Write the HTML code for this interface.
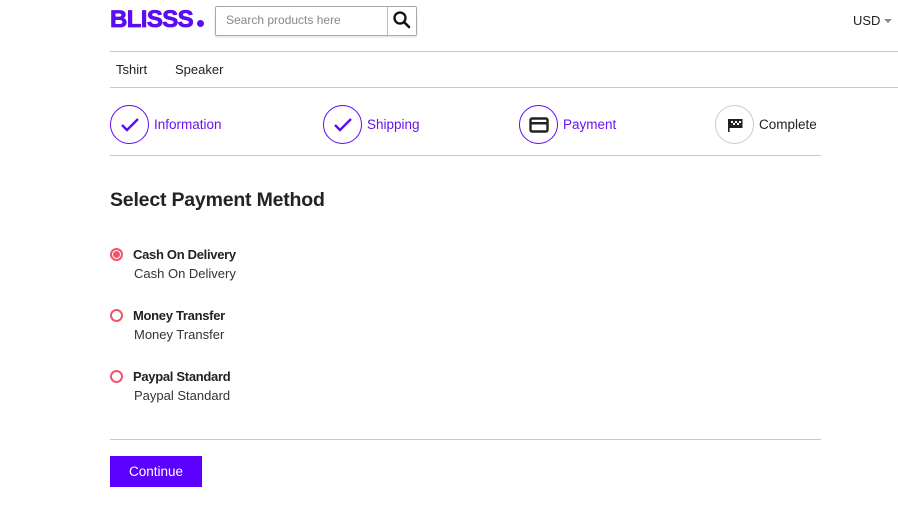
<!DOCTYPE html>
<html><head><meta charset="utf-8"><style>
*{margin:0;padding:0;box-sizing:border-box}
body{width:898px;height:514px;background:#fff;font-family:"Liberation Sans",sans-serif;color:#222;position:relative;overflow:hidden}
.a{position:absolute}
.line{position:absolute;height:1px;background:#c8c8c8}
.circ{position:absolute;width:39px;height:39px;border-radius:50%;border:1px solid #5b0cf2;display:flex;align-items:center;justify-content:center}
.lbl{position:absolute;font-size:13.5px;color:#6a12ef}
.radio{position:absolute;width:13px;height:13px;border-radius:50%;border:2px solid #f0566b}
.t1{position:absolute;font-size:13px;font-weight:bold;color:#222;letter-spacing:-0.3px}
.t2{position:absolute;font-size:13px;color:#333}
</style></head><body>
<div class="a" style="left:110px;top:6px;font-size:24px;font-weight:900;color:#5b0cf2;letter-spacing:-0.6px;-webkit-text-stroke:0.8px #5b0cf2">BLISSS<span style="display:inline-block;width:7px;height:7px;border-radius:50%;background:#5b0cf2;margin-left:4px"></span></div>
<div class="a" style="left:215px;top:6px;width:202px;height:30px;border:1px solid #aaa;border-radius:2px;box-shadow:0 1px 2px rgba(0,0,0,.15)"></div>
<div class="a" style="left:226px;top:13px;font-size:12px;color:#888">Search products here</div>
<div class="a" style="left:387px;top:7px;width:1px;height:28px;background:#bbb"></div>
<svg class="a" style="left:392px;top:10px" width="20" height="20" viewBox="0 0 20 20"><circle cx="8" cy="8" r="5.5" fill="none" stroke="#111" stroke-width="2.3"/><line x1="12" y1="12" x2="17" y2="17" stroke="#111" stroke-width="2.6" stroke-linecap="round"/></svg>
<div class="a" style="left:853px;top:13px;font-size:13px;color:#222">USD</div>
<div class="a" style="left:884px;top:19px;border-left:4px solid transparent;border-right:4px solid transparent;border-top:4px solid #888"></div>
<div class="line" style="left:110px;top:51px;width:788px"></div>
<div class="a" style="left:116px;top:62px;font-size:13px">Tshirt</div>
<div class="a" style="left:175px;top:62px;font-size:13px">Speaker</div>
<div class="line" style="left:110px;top:87px;width:788px"></div>

<div class="circ" style="left:110px;top:105px"><svg width="20" height="16" viewBox="0 0 20 16"><path d="M2 8l5 5L18 2" fill="none" stroke="#5b0cf2" stroke-width="2.4"/></svg></div>
<div class="lbl" style="left:154px;top:117px">Information</div>
<div class="circ" style="left:323px;top:105px"><svg width="20" height="16" viewBox="0 0 20 16"><path d="M2 8l5 5L18 2" fill="none" stroke="#5b0cf2" stroke-width="2.4"/></svg></div>
<div class="lbl" style="left:367px;top:117px">Shipping</div>
<div class="circ" style="left:519px;top:105px"><svg width="20" height="16" viewBox="0 0 20 16"><rect x="1.5" y="1.5" width="17" height="13" rx="1.5" fill="none" stroke="#222" stroke-width="2.4"/><rect x="2" y="5" width="16" height="2.5" fill="#222"/></svg></div>
<div class="lbl" style="left:563px;top:117px">Payment</div>
<div class="circ" style="left:715px;top:105px;border-color:#ccc"><svg width="18" height="18" viewBox="0 0 18 18"><rect x="2" y="3" width="1.6" height="13" fill="#222"/><rect x="3.5" y="3" width="13" height="9" fill="#222"/><g fill="#fff"><rect x="5" y="5" width="2" height="2"/><rect x="9" y="5" width="2" height="2"/><rect x="13" y="5" width="2" height="2"/><rect x="7" y="7" width="2" height="2"/><rect x="11" y="7" width="2" height="2"/></g></svg></div>
<div class="a" style="left:759px;top:117px;font-size:13.5px;color:#222">Complete</div>
<div class="line" style="left:110px;top:155px;width:711px"></div>

<div class="a" style="left:110px;top:189px;font-size:19.5px;font-weight:bold;color:#222;letter-spacing:-0.2px">Select Payment Method</div>

<div class="radio" style="left:110px;top:248px"><div style="width:7px;height:7px;border-radius:50%;background:#f0566b;margin:1px"></div></div>
<div class="t1" style="left:133px;top:247px">Cash On Delivery</div>
<div class="t2" style="left:134px;top:266px">Cash On Delivery</div>
<div class="radio" style="left:110px;top:309px"></div>
<div class="t1" style="left:133px;top:308px">Money Transfer</div>
<div class="t2" style="left:134px;top:327px">Money Transfer</div>
<div class="radio" style="left:110px;top:370px"></div>
<div class="t1" style="left:133px;top:369px">Paypal Standard</div>
<div class="t2" style="left:134px;top:388px">Paypal Standard</div>

<div class="line" style="left:110px;top:439px;width:711px"></div>
<div class="a" style="left:110px;top:456px;width:92px;height:31px;background:#5b00ff;color:#fff;font-size:13.5px;display:flex;align-items:center;justify-content:center">Continue</div>
</body></html>
